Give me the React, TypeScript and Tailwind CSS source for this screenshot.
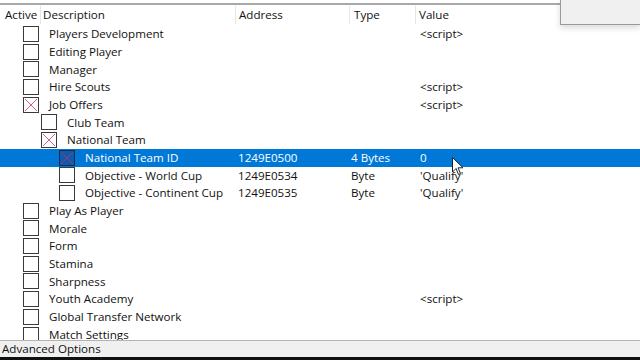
import React from 'react'

type Row = {
  label: string
  level: number
  checked?: boolean
  address?: string
  type?: string
  value?: string
  selected?: boolean
}

const rows: Row[] = [
  { label: 'Players Development', level: 0, value: '<script>' },
  { label: 'Editing Player', level: 0 },
  { label: 'Manager', level: 0 },
  { label: 'Hire Scouts', level: 0, value: '<script>' },
  { label: 'Job Offers', level: 0, checked: true, value: '<script>' },
  { label: 'Club Team', level: 1 },
  { label: 'National Team', level: 1, checked: true },
  { label: 'National Team ID', level: 2, checked: true, address: '1249E0500', type: '4 Bytes', value: '0', selected: true },
  { label: 'Objective - World Cup', level: 2, address: '1249E0534', type: 'Byte', value: "'Qualify'" },
  { label: 'Objective - Continent Cup', level: 2, address: '1249E0535', type: 'Byte', value: "'Qualify'" },
  { label: 'Play As Player', level: 0 },
  { label: 'Morale', level: 0 },
  { label: 'Form', level: 0 },
  { label: 'Stamina', level: 0 },
  { label: 'Sharpness', level: 0 },
  { label: 'Youth Academy', level: 0, value: '<script>' },
  { label: 'Global Transfer Network', level: 0 },
  { label: 'Match Settings', level: 0 },
]

const indent = ['pl-[23px]', 'pl-[41px]', 'pl-[59px]']

function Check({ checked, selected }: { checked?: boolean; selected?: boolean }) {
  return (
    <div
      className={
        'w-[16px] h-[16px] shrink-0 border ' +
        (selected ? 'border-[#1a2a4a] bg-[#0a5cb0]' : 'border-[#3a3a3a] bg-white')
      }
    >
      {checked && (
        <svg width="14" height="14" viewBox="0 0 14 14">
          <path d="M1 1 L13 13 M13 1 L1 13" stroke={selected ? '#b0306a' : '#e0607a'} strokeWidth="1" />
        </svg>
      )}
    </div>
  )
}

function Cursor() {
  return (
    <svg className="absolute left-[452px] top-[157px]" width="12" height="19" viewBox="0 0 12 19">
      <path d="M0.5 0.5 L0.5 15 L4 11.5 L6.5 17.5 L8.5 16.5 L6 10.8 L11 10.8 Z" fill="white" stroke="#222" strokeWidth="1" />
    </svg>
  )
}

const App: React.FC = () => {
  return (
    <div
      className="relative w-[640px] h-[360px] overflow-hidden bg-white text-[#111] text-[11.6px] flex flex-col"
      style={{ fontFamily: '"Open Sans", "Noto Sans", sans-serif' }}
    >
      <div className="h-[3px] shrink-0 bg-white" />
      <div className="h-[2px] shrink-0 bg-[#a8a8a8]" />

      <div className="h-[20px] shrink-0 flex items-center">
        <div className="w-[41px] pl-[5px] border-r border-[#e6e6e6]">Active</div>
        <div className="w-[195px] pl-[2px] border-r border-[#e6e6e6]">Description</div>
        <div className="w-[114px] pl-[3px] border-r border-[#e6e6e6]">Address</div>
        <div className="w-[66px] pl-[4px] border-r border-[#e6e6e6]">Type</div>
        <div className="pl-[3px]">Value</div>
      </div>

      <div className="flex-1 overflow-hidden">
        {rows.map((r) => (
          <div
            key={r.label}
            className={
              'h-[17.7px] flex items-center ' + (r.selected ? 'bg-[#0078d7] text-white' : '')
            }
          >
            <div className={'w-[236px] flex items-center gap-[10px] ' + indent[r.level]}>
              <Check checked={r.checked} selected={r.selected} />
              <span className="whitespace-nowrap">{r.label}</span>
            </div>
            <div className="w-[114px] pl-[2px]">{r.address}</div>
            <div className="w-[66px] pl-[1px]">{r.type}</div>
            <div className="pl-[4px]">{r.value}</div>
          </div>
        ))}
      </div>

      <div className="h-[1px] shrink-0 bg-[#b4b4b4]" />
      <div className="h-[16px] shrink-0 bg-[#f0f0f0] flex items-center pl-[2px] text-[#111]">
        Advanced Options
      </div>
      <div className="h-[3px] shrink-0 bg-[#111]" />

      <div className="absolute right-0 top-0 w-[80px] h-[25px] bg-[#f0f0f0] border-l border-b border-[#9a9a9a] shadow-[0_3px_6px_rgba(0,0,0,0.15)]" />
      <Cursor />
    </div>
  )
}

export default App
